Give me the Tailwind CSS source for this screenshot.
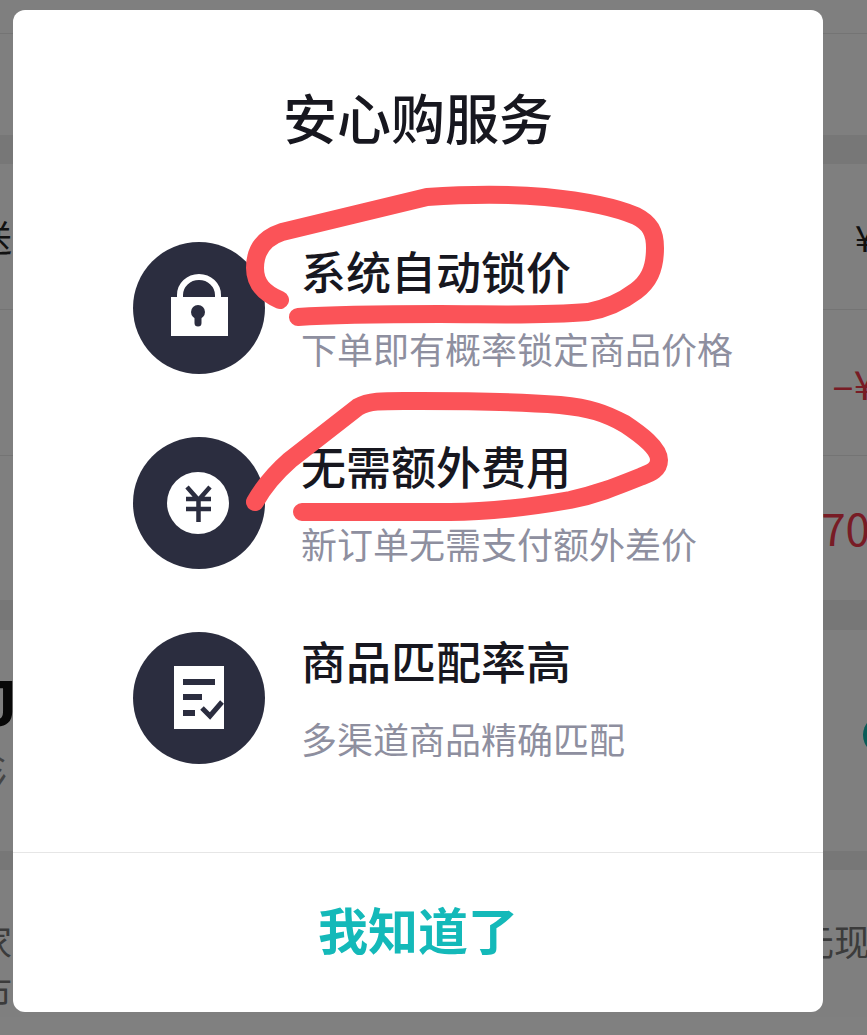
<!DOCTYPE html>
<html lang="zh-CN">
<head>
  <meta charset="UTF-8">
  <title>安心购服务</title>
  <script src="https://cdn.jsdelivr.net/npm/@tailwindcss/browser@4"></script>
</head>
<body class="bg-white font-['Noto_Sans_CJK_SC','Liberation_Sans',sans-serif]">
<div class="relative w-[867px] h-[1035px] overflow-hidden bg-[#eeeeee]">

  <!-- Page behind the dialog -->
  <div class="flex flex-col">
    <div class="h-[34px] bg-white border-b border-[#e8e8e8]"></div>
    <div class="h-[101px] bg-white"></div>
    <div class="h-[29px]"></div>
    <div class="h-[146px] bg-white border-b border-[#e8e8e8] flex items-center justify-between overflow-hidden pb-[2px]">
      <span class="ml-[-24px] text-[36px] leading-none text-[#222222]">送</span>
      <span class="mr-[-8px] text-[36px] leading-none text-[#222222]">¥</span>
    </div>
    <div class="h-[146px] bg-white border-b border-[#e8e8e8] flex items-center justify-end overflow-hidden">
      <span class="mr-[-9px] text-[40px] leading-none text-[#f0384a]">–¥</span>
    </div>
    <div class="h-[144px] bg-white flex items-center justify-end overflow-hidden pb-[3px]">
      <span class="mr-[-3px] text-[44px] leading-none text-[#f0384a]">70</span>
    </div>
    <div class="h-[30px]"></div>
    <div class="relative h-[221px] bg-white flex flex-col overflow-hidden">
      <span class="absolute left-[-19px] top-[42px] font-['Liberation_Sans'] text-[64px] leading-none font-bold text-[#111111]">J</span>
      <span class="absolute left-[-9px] top-[122px] text-[36px] leading-none text-[#888888]">氵</span>
      <span class="absolute right-[-36px] top-[85px] w-[40px] h-[40px] rounded-full bg-[#14b8b0]"></span>
    </div>
    <div class="h-[19px]"></div>
    <div class="relative h-[165px] bg-white overflow-hidden">
      <span class="absolute left-[-24px] top-[52px] text-[36px] leading-none text-[#777777]">家</span>
      <span class="absolute left-[-24px] top-[102px] text-[36px] leading-none text-[#777777]">市</span>
      <span class="absolute right-[-3px] top-[52px] text-[36px] leading-none text-[#777777]">元现</span>
    </div>
  </div>

  <!-- Backdrop -->
  <div class="absolute inset-0 bg-black/50"></div>

  <!-- Dialog -->
  <div class="absolute left-[13px] top-[10px] w-[810px] h-[1002px] bg-white rounded-[12px] flex flex-col">
    <h1 class="mt-[74px] h-[66px] flex items-center justify-center text-[54px] leading-none font-medium text-[#17171f]">安心购服务</h1>

    <div class="mt-[92px] ml-[120px] flex flex-col gap-[63px]">
      <div class="flex gap-[37px] h-[132px]">
        <svg class="shrink-0" width="132" height="132" viewBox="0 0 132 132">
          <circle cx="66" cy="66" r="66" fill="#2b2d3f"/>
          <path d="M47 57V53a19 18 0 0 1 38 0V57" fill="none" stroke="#fff" stroke-width="6"/>
          <rect x="38" y="55" width="57" height="39" fill="#fff"/>
          <circle cx="65" cy="70" r="7" fill="#2b2d3f"/>
          <path d="M65 72V81" stroke="#2b2d3f" stroke-width="7" stroke-linecap="round"/>
        </svg>
        <div class="flex flex-col">
          <div class="mt-[5px] ml-[-1px] h-[46px] flex items-center text-[45px] leading-none font-medium text-[#17171f]">系统自动锁价</div>
          <div class="mt-[35px] ml-[-1px] h-[40px] flex items-center text-[36px] leading-none text-[#8e8f9f]">下单即有概率锁定商品价格</div>
        </div>
      </div>

      <div class="flex gap-[37px] h-[132px]">
        <svg class="shrink-0" width="132" height="132" viewBox="0 0 132 132">
          <circle cx="66" cy="66" r="66" fill="#2b2d3f"/>
          <circle cx="65" cy="66" r="31" fill="#fff"/>
          <path d="M54 50L65.500 63L77 50M53 62H78M53 72H78M65.500 63V85" fill="none" stroke="#2b2d3f" stroke-width="4.500"/>
        </svg>
        <div class="flex flex-col">
          <div class="mt-[5px] ml-[-1px] h-[46px] flex items-center text-[45px] leading-none font-medium text-[#17171f]">无需额外费用</div>
          <div class="mt-[35px] ml-[-1px] h-[40px] flex items-center text-[36px] leading-none text-[#8e8f9f]">新订单无需支付额外差价</div>
        </div>
      </div>

      <div class="flex gap-[37px] h-[132px]">
        <svg class="shrink-0" width="132" height="132" viewBox="0 0 132 132">
          <circle cx="66" cy="66" r="66" fill="#2b2d3f"/>
          <rect x="41" y="34" width="50" height="63" fill="#fff"/>
          <rect x="50" y="47" width="32" height="6" fill="#2b2d3f"/>
          <rect x="50" y="62" width="19" height="6" fill="#2b2d3f"/>
          <rect x="50" y="78" width="12" height="6" fill="#2b2d3f"/>
          <path d="M69 76L77 84L89 70" fill="none" stroke="#2b2d3f" stroke-width="5"/>
        </svg>
        <div class="flex flex-col">
          <div class="mt-[5px] ml-[-1px] h-[46px] flex items-center text-[45px] leading-none font-medium text-[#17171f]">商品匹配率高</div>
          <div class="mt-[35px] ml-[-1px] h-[40px] flex items-center text-[36px] leading-none text-[#8e8f9f]">多渠道商品精确匹配</div>
        </div>
      </div>
    </div>

    <button class="mt-auto h-[160px] border-t border-[#e6e6e6] flex items-center justify-center text-[50px] leading-none font-bold text-[#14b9b9] pb-[9px]">我知道了</button>
  </div>

  <!-- Red marker annotations drawn on top of the screenshot -->
  <svg class="absolute inset-0 pointer-events-none" width="867" height="1035" viewBox="0 0 867 1035" fill="none" stroke="#fb5358" stroke-width="18" stroke-linecap="round" stroke-linejoin="round">
    <path d="M280 300C264 293 255 284 255 268C255 250 264 238 282 232L427 197C470 194 510 194 545 197C585 201 615 207 636 216C650 223 655 232 655 248C655 270 648 282 636 291C620 303 605 309 588 312C540 316 490 314 440 314C390 314 340 314 298 317"/>
    <path d="M255 502C264 486 274 474 290 460L358 407C370 400 385 401 420 401C470 401 520 402 560 405C590 408 605 413 625 424C640 434 659 448 659 460C659 470 650 473 640 477C615 487 595 495 570 500C530 507 490 512 450 512L302 512"/>
  </svg>
</div>
</body>
</html>
